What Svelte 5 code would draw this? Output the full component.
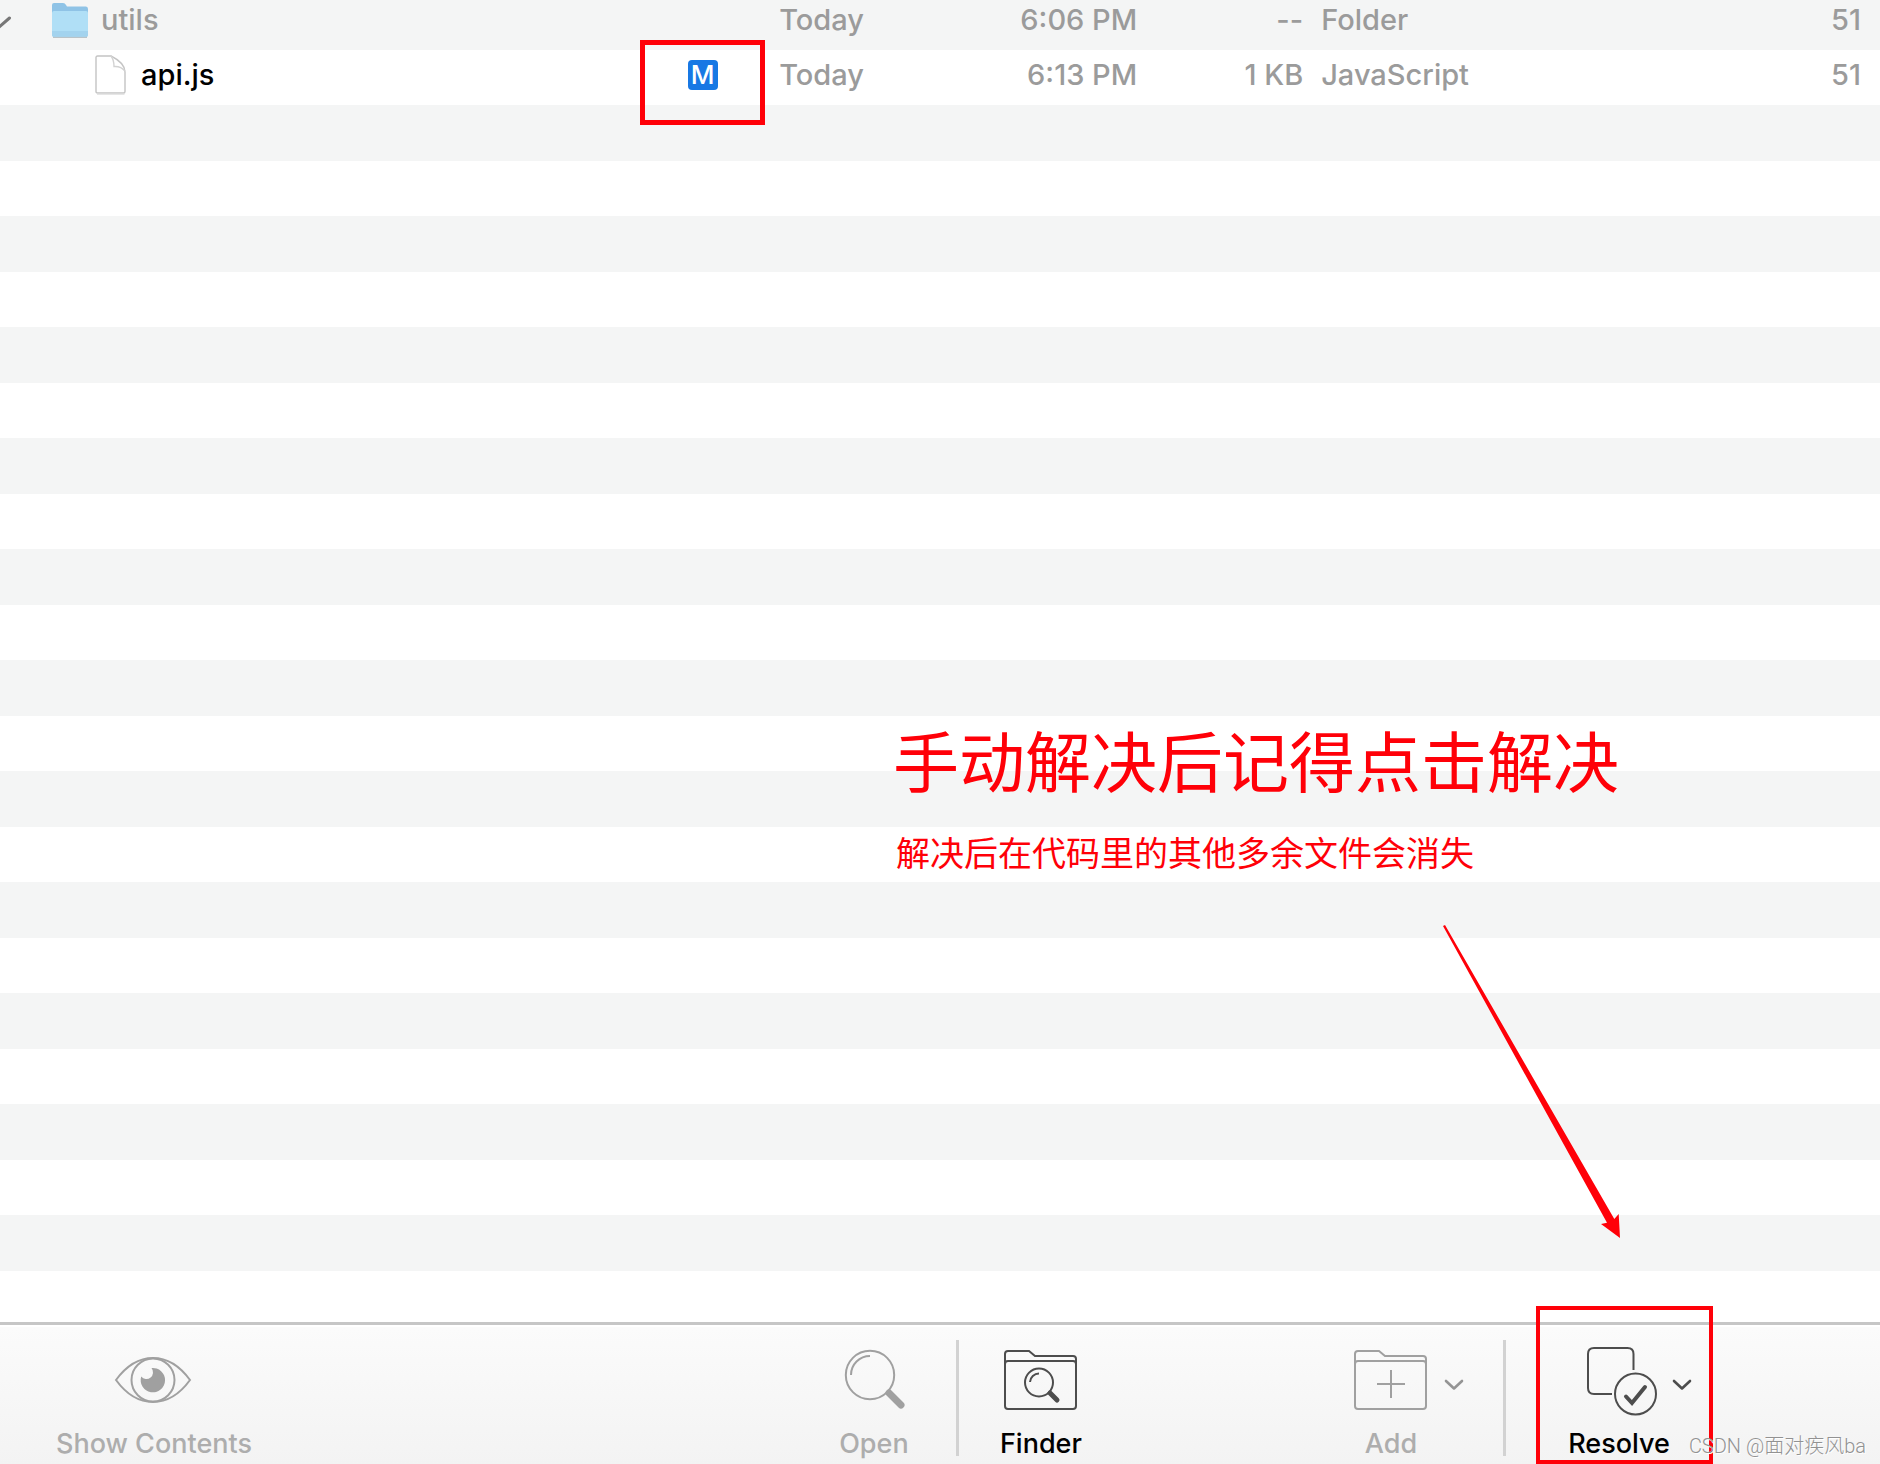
<script lang="ts">
  interface FileRow {
    name: string;
    type: 'folder' | 'file';
    status?: string;
    date: string;
    time: string;
    size: string;
    kind: string;
    revision: number;
  }

  const rows: FileRow[] = [
    { name: 'utils', type: 'folder', date: 'Today', time: '6:06 PM', size: '--', kind: 'Folder', revision: 51 },
    { name: 'api.js', type: 'file', status: 'M', date: 'Today', time: '6:13 PM', size: '1 KB', kind: 'JavaScript', revision: 51 },
  ];
</script>

{#snippet folder()}
  <path d="M4 60V8Q4 5 7 5H28L34 10H72Q75 10 75 13V60Q75 63 72 63H7Q4 63 4 60Z" />
  <path d="M4 18Q4 15 7 15H72Q75 15 75 18" />
{/snippet}

{#snippet chevron()}
  <svg width="20" height="12" viewBox="0 0 20 12" fill="none" stroke="currentColor" stroke-width="2.6" stroke-linecap="round" stroke-linejoin="round">
    <path d="M2 2L10 9.5L18 2" />
  </svg>
{/snippet}

<div class="window">
  <main class="browser">
    <table class="files">
      <colgroup>
        <col class="col-name" />
        <col class="col-status" />
        <col class="col-date" />
        <col class="col-time" />
        <col class="col-size" />
        <col />
        <col class="col-revision" />
      </colgroup>
      <tbody>
        {#each rows as row}
          <tr>
            <td>
              <div class="name" class:name--child={row.type === 'file'}>
                {#if row.type === 'folder'}
                  <button class="disclosure" aria-label="Collapse {row.name}">
                    <svg width="12" height="14" viewBox="0 0 12 14" fill="none" stroke="#777" stroke-width="3" stroke-linecap="round">
                      <path d="M-2 13L9.5 3" />
                    </svg>
                  </button>
                  <svg width="38" height="36" viewBox="0 0 38 36">
                    <path d="M2 35H36" stroke="#b9c3c8" stroke-width="2" />
                    <path d="M1 33V3Q1 1 3 1H12Q14 1 15 3L16 4.500H35Q37 4.500 37 7V33Q37 34.500 35 34.500H3Q1 34.500 1 33Z" fill="#8fc3e6" />
                    <path d="M1 11Q1 9 3 9H35Q37 9 37 11V33Q37 34.500 35 34.500H3Q1 34.500 1 33Z" fill="#b0dff6" />
                    <path d="M1 29H37V33Q37 34.500 35 34.500H3Q1 34.500 1 33Z" fill="#a3d3ee" />
                  </svg>
                {:else}
                  <svg width="32" height="40" viewBox="0 0 32 40" fill="#fff" stroke="#c4c4c4" stroke-width="1.400">
                    <path d="M1 2.500Q1 1 2.500 1H16Q30 8 30 17V36.500Q30 38 28.500 38H2.500Q1 38 1 36.500Z" />
                    <path d="M16 1Q19 5 19 11.500Q26 11 30 16" stroke="#d2d2d2" />
                    <path d="M2 39H29.500" stroke="#dcdcdc" />
                  </svg>
                {/if}
                <span>{row.name}</span>
              </div>
            </td>
            <td class="status">
              {#if row.status}
                <span class="badge">{row.status}</span>
                <span class="mark mark--status" aria-hidden="true"></span>
              {/if}
            </td>
            <td class="date">{row.date}</td>
            <td class="right">{row.time}</td>
            <td class="right">{row.size}</td>
            <td class="kind">{row.kind}</td>
            <td class="right revision">{row.revision}</td>
          </tr>
        {/each}
      </tbody>
    </table>
    <div class="stripes"></div>
  </main>

  <footer class="toolbar">
    <button class="tool tool--show" disabled>
      <svg class="icon" viewBox="0 0 80 70" fill="none" stroke="currentColor" stroke-width="2">
        <path d="M2 34Q18 12 39 12Q60 12 76 34Q60 56 39 56Q18 56 2 34Z" />
        <circle cx="39" cy="34" r="21.500" />
        <path d="M37.500 22A12.200 12.200 0 1 1 27.200 30.500A6.200 6.200 0 0 0 37.500 22Z" fill="currentColor" stroke="none" />
      </svg>
      <span>Show Contents</span>
    </button>
    <div class="space space--wide"></div>
    <button class="tool tool--wide" disabled>
      <svg class="icon" viewBox="0 0 80 70" fill="none" stroke="currentColor" stroke-width="2">
        <circle cx="36" cy="29" r="24.200" />
        <path d="M17 29A19 19 0 0 1 36 10" />
        <path d="M55 47L67 59" stroke-width="7" stroke-linecap="round" />
      </svg>
      <span>Open</span>
    </button>
    <div class="divider"></div>
    <button class="tool tool--wide">
      <svg class="icon" viewBox="0 0 80 70" fill="none" stroke="currentColor" stroke-width="2">
        {@render folder()}
        <circle cx="38" cy="36.500" r="14" />
        <path d="M29 36A9 9 0 0 1 38 27.500" />
        <path d="M49 47L56 54" stroke-width="5" stroke-linecap="round" />
      </svg>
      <span>Finder</span>
    </button>
    <div class="space"></div>
    <div class="group">
      <button class="tool" disabled>
        <svg class="icon" viewBox="0 0 80 70" fill="none" stroke="currentColor" stroke-width="2">
          {@render folder()}
          <path d="M26 38H54M40 24V52" />
        </svg>
        <span>Add</span>
      </button>
      <button class="menu" disabled aria-label="Add options">{@render chevron()}</button>
    </div>
    <div class="divider"></div>
    <div class="group group--resolve">
      <button class="tool">
        <svg class="icon" viewBox="0 0 80 70" fill="none" stroke="currentColor" stroke-width="2">
          <path d="M33 48H15Q9 48 9 42V8Q9 2 15 2H48.500Q54.500 2 54.500 8V24" />
          <circle cx="56.500" cy="48" r="20.500" />
          <path d="M47 50.500L53 57L66 41" stroke-width="4" stroke-linecap="round" />
        </svg>
        <span>Resolve</span>
      </button>
      <button class="menu" aria-label="Resolve options">{@render chevron()}</button>
      <span class="mark mark--resolve" aria-hidden="true"></span>
    </div>
  </footer>

  <div class="note">
    <p class="note__title">手动解决后记得点击解决</p>
    <p class="note__text">解决后在代码里的其他多余文件会消失</p>
  </div>
  <svg class="arrow" width="184" height="322" viewBox="0 0 184 322" fill="#ff0008">
    <path d="M3 6L5 5L174.300 299L178.700 294L180 318L161 304L167 302.700Z" />
  </svg>
  <span class="watermark">CSDN @面对疾风ba</span>
</div>

<style>
  :global(body) {
    margin: 0;
    background: #fff;
  }

  .window {
    position: relative;
    display: flex;
    flex-direction: column;
    min-height: 100vh;
    overflow: hidden;
    font-family: Inter, 'Noto Sans CJK SC', sans-serif;
    color: #9b9b9b;
  }

  .browser {
    flex: 1;
    display: flex;
    flex-direction: column;
  }

  /* the list is scrolled a little, so the first row is cut at the top */
  .files {
    width: 100%;
    margin-top: -6px;
    table-layout: fixed;
    border-collapse: collapse;
    font-size: 29px;
    font-weight: 500;
    line-height: 36px;
  }

  .col-name {
    width: 34%;
  }

  .col-status {
    width: 127px;
  }

  .col-date {
    width: 200px;
  }

  .col-time {
    width: 171px;
  }

  .col-size {
    width: 166px;
  }

  .col-revision {
    width: 140px;
  }

  tr {
    height: 56px;
    background: #f4f5f5;
  }

  tr:nth-child(even) {
    height: 55px;
    background: #fff;
  }

  td {
    height: inherit;
    box-sizing: border-box;
    padding: 0 0 5px;
    white-space: nowrap;
  }

  .name {
    display: flex;
    align-items: center;
    gap: 12px;
  }

  .name--child {
    gap: 14px;
    padding-left: 95px;
    color: #000;
  }

  .disclosure {
    display: flex;
    width: 39px;
    padding: 4px 0 0;
    border: 0;
    background: none;
  }

  .status {
    position: relative;
    text-align: center;
  }

  .badge {
    display: block;
    width: 30px;
    margin: 0 auto;
    border-radius: 4px;
    background: #1878e4;
    color: #fff;
    font-size: 26px;
    line-height: 30px;
  }

  .date {
    padding-left: 13px;
  }

  .right {
    text-align: right;
  }

  .kind {
    padding-left: 18px;
  }

  .revision {
    padding-right: 19px;
  }

  .stripes {
    flex: 1;
    background: repeating-linear-gradient(#f4f5f5 0 56px, #fff 56px 111px);
  }

  .toolbar {
    display: flex;
    align-items: flex-start;
    padding: 21px 188px 3px 0;
    border-top: 3px solid #c6c6c6;
    background: linear-gradient(#fff 0 2px, #fbfbfb 2px, #f3f3f3);
  }

  .tool {
    display: flex;
    flex-direction: column;
    align-items: center;
    gap: 11px;
    width: 106px;
    padding: 0;
    border: 0;
    background: none;
    color: #000;
    font: 500 27px/34px Inter, sans-serif;
    white-space: nowrap;
  }

  .tool--wide {
    width: 164px;
  }

  .tool--show {
    width: 308px;
  }

  .tool:disabled {
    color: #adadad;
  }

  .icon {
    width: 80px;
    height: 70px;
    color: #4d4d4d;
  }

  .tool:disabled .icon {
    color: #a0a0a0;
  }

  .space {
    flex: 4;
  }

  .space--wide {
    flex: 9;
  }

  .divider {
    align-self: stretch;
    width: 3px;
    margin: -6px 0 5px;
    background: #d2d2d2;
  }

  .group {
    position: relative;
    display: flex;
    margin-right: 39px;
  }

  .group--resolve {
    margin: 0 0 0 60px;
  }

  .menu {
    display: flex;
    align-items: center;
    width: 20px;
    height: 78px;
    padding: 0;
    border: 0;
    background: none;
    color: #4d4d4d;
  }

  .menu:disabled {
    color: #949494;
  }

  .mark {
    position: absolute;
    box-sizing: border-box;
    border: 4px solid #ff0008;
    pointer-events: none;
  }

  .mark--status {
    inset: -10px 1px -20px;
    border-width: 5px;
  }

  .mark--resolve {
    inset: -40px -21px -3px -30px;
  }

  .note {
    position: absolute;
    top: 718px;
    left: 47.5%;
    color: #ff0008;
    font-family: 'Noto Sans CJK SC', sans-serif;
    white-space: nowrap;
  }

  .note p {
    margin: 0;
  }

  .note__title {
    font-size: 66px;
    line-height: 80px;
  }

  .note .note__text {
    margin-top: 34px;
    padding-left: 3px;
    font-size: 34px;
    line-height: 40px;
  }

  .arrow {
    position: absolute;
    right: 256px;
    bottom: 222px;
  }

  .watermark {
    position: absolute;
    right: 14px;
    bottom: 5px;
    color: #929292;
    font: 300 20px/26px Roboto, 'Noto Sans CJK SC', sans-serif;
    text-shadow: 1px 1px 0 #fff;
  }
</style>
